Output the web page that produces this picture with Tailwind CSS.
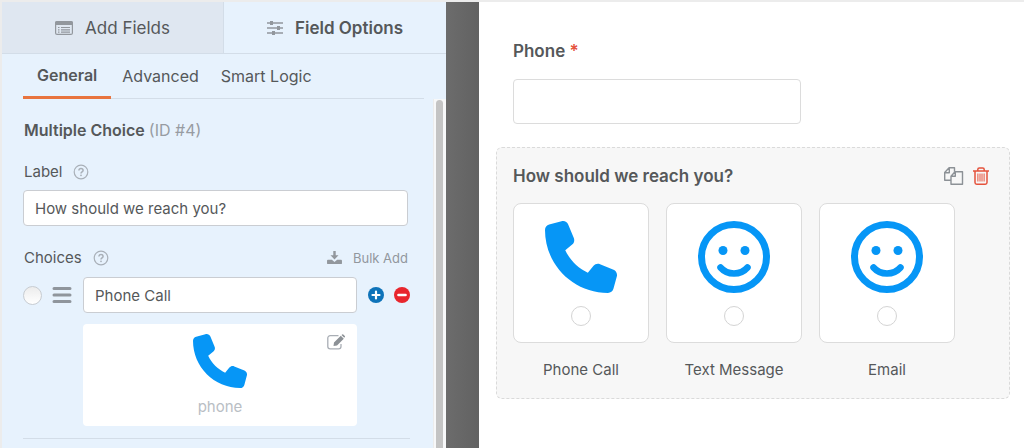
<!DOCTYPE html>
<html lang="en">
<head>
  <meta charset="UTF-8">
  <meta name="viewport" content="width=device-width, initial-scale=1.0">
  <title>Form Builder</title>
  <script src="https://cdn.jsdelivr.net/npm/@tailwindcss/browser@4"></script>
</head>
<body class="min-h-screen flex flex-col border-t-2 border-[#ececec] bg-white font-['Inter',sans-serif] text-[15px] leading-5 text-[#55585a]">
  <!-- Shared icon shapes -->
  <svg class="hidden" aria-hidden="true">
    <symbol id="phone" viewBox="0 0 512 512">
      <path fill="currentColor" d="M164.9 24.6c-7.7-18.6-28-28.5-47.4-23.2l-88 24C12.1 30.2 0 46 0 64C0 311.4 200.6 512 448 512c18 0 33.8-12.1 38.6-29.5l24-88c5.3-19.4-4.6-39.7-23.2-47.4l-96-40c-16.3-6.8-35.2-2.1-46.3 11.6L304.7 368C234.3 334.7 177.3 277.7 144 207.3L193.3 167c13.7-11.2 18.4-30 11.6-46.3l-40-96z"/>
    </symbol>
    <symbol id="smile" viewBox="0 0 72 72">
      <circle cx="36" cy="36" r="32.5" fill="none" stroke="currentColor" stroke-width="7"/>
      <circle cx="25" cy="29.5" r="4.5" fill="currentColor"/>
      <circle cx="47" cy="29.5" r="4.5" fill="currentColor"/>
      <path fill="none" stroke="currentColor" stroke-width="6.5" stroke-linecap="round" d="M22.5 46.5C29.5 54.5 42.5 54.5 49.5 46.5"/>
    </symbol>
    <symbol id="help" viewBox="0 0 16 16">
      <circle cx="8" cy="8" r="6.8" fill="none" stroke="currentColor" stroke-width="1.2"/>
      <path fill="none" stroke="currentColor" stroke-width="1.5" d="M5.9 6.5C6 5.2 6.9 4.6 8 4.6s2.1.7 2.1 1.8C10.1 7.8 8 7.9 8 9.4"/>
      <circle cx="8" cy="11.3" r=".9" fill="currentColor"/>
    </symbol>
  </svg>

  <div class="flex grow">
    <!-- Sidebar -->
    <aside class="w-[446px] shrink-0 flex flex-col border-l-2 border-[#ececec] bg-[#e7f2fd]">
      <div class="grid grid-cols-2 h-[52px] text-[17px]">
        <button class="flex items-center justify-center gap-3 border-r border-b border-[#d3dde8] bg-[#dfe7f1]">
          <svg class="w-[18px] h-4 text-[#92979d]" viewBox="0 0 18 16" fill="none" stroke="currentColor">
            <rect x=".6" y="1.6" width="16.8" height="12.8" rx="1.5" stroke-width="1.2"/>
            <path fill="currentColor" stroke="none" d="M0 3a2 2 0 0 1 2-2h14a2 2 0 0 1 2 2v2H0z"/>
            <path stroke-width="1.2" d="M3 7.5h1.5M6 7.5h9M3 9.8h1.5M6 9.8h9M3 12.1h1.5M6 12.1h9"/>
          </svg>
          Add Fields
        </button>
        <button class="flex items-center justify-center gap-3 border-b border-[#d3dde8] font-semibold">
          <svg class="w-4 h-4 text-[#92979d]" viewBox="0 0 16 16">
            <path fill="none" stroke="currentColor" stroke-width="1.3" d="M0 3h16M0 8h16M0 13h16"/>
            <path fill="currentColor" d="M3 1h3v4H3zM10 6h3v4h-3zM5 11h3v4H5z"/>
          </svg>
          Field Options
        </button>
      </div>

      <nav class="ml-[21px] mr-[22px] flex h-[45px] border-b border-[#d3dde8] text-[16px]">
        <a href="#general" class="-mb-px flex items-center px-[14px] border-b-3 border-[#e8743f] font-semibold">General</a>
        <a href="#advanced" class="flex items-center pl-[11px] pr-[22px]">Advanced</a>
        <a href="#logic" class="flex items-center">Smart Logic</a>
      </nav>

      <div class="flex grow">
        <div class="grow pl-[21px] pr-[22px]">
          <h2 class="mt-[21px] pl-px text-[16px] font-semibold">Multiple Choice <span class="font-normal text-[#979ca2]">(ID #4)</span></h2>

          <div class="mt-[22px] flex items-center gap-[11px] pl-px">
            <label for="fieldLabel">Label</label>
            <svg class="size-4 text-[#a9b0b8]"><use href="#help"/></svg>
          </div>
          <input id="fieldLabel" type="text" value="How should we reach you?" class="mt-2 block h-9 w-[385px] rounded border border-[#cacdd2] bg-white px-[11px]">

          <div class="mt-[22px] flex w-[385px] items-center gap-[11px] pl-px">
            <span>Choices</span>
            <svg class="size-4 text-[#a9b0b8]"><use href="#help"/></svg>
            <button class="ml-auto flex items-center gap-[11px] text-[13px] text-[#92979d]">
              <svg class="w-[15px] h-[14px]" viewBox="0 0 16 15" fill="currentColor">
                <path d="M6.7 0h2.6v4.5h3L8 9 3.7 4.5h3z"/>
                <path d="M1 9.5h4.2L8 11.8l2.8-2.3H15a1 1 0 0 1 1 1V13a1 1 0 0 1-1 1H1a1 1 0 0 1-1-1v-2.5a1 1 0 0 1 1-1z"/>
              </svg>
              Bulk Add
            </button>
          </div>

          <div class="mt-[9px] flex items-center">
            <input type="radio" name="default" aria-label="Default choice" class="size-[19px] appearance-none rounded-full border border-[#c8ccd1] bg-linear-to-b from-[#ececec] to-white">
            <button aria-label="Reorder" class="ml-[10px] text-[#8f959c]">
              <svg class="w-5 h-[18px]" viewBox="0 0 20 18"><path stroke="currentColor" stroke-width="3" stroke-linecap="round" d="M2 2.5h16M2 9h16M2 15.5h16"/></svg>
            </button>
            <input type="text" value="Phone Call" aria-label="Choice label" class="ml-[11px] h-9 w-[274px] rounded border border-[#cacdd2] bg-white px-[11px]">
            <button aria-label="Add choice" class="ml-[11px]">
              <svg class="size-4" viewBox="0 0 16 16"><circle cx="8" cy="8" r="8" fill="#0e73b9"/><path stroke="#fff" stroke-width="2.2" stroke-linecap="round" d="M8 4.5v7M4.5 8h7"/></svg>
            </button>
            <button aria-label="Remove choice" class="ml-[10px]">
              <svg class="size-4" viewBox="0 0 16 16"><circle cx="8" cy="8" r="8" fill="#e8262d"/><path stroke="#fff" stroke-width="2.6" stroke-linecap="round" d="M4.5 8h7"/></svg>
            </button>
          </div>

          <div class="relative ml-[60px] mt-[11px] flex h-[102px] w-[274px] flex-col items-center rounded bg-white pt-[10px]">
            <svg class="size-[54px] text-[#0696f6]"><use href="#phone"/></svg>
            <span class="mt-[9px] text-[#b9bec4]">phone</span>
            <button aria-label="Edit icon" class="absolute right-3 top-[10px] text-[#8c9196]">
              <svg class="w-[18px] h-4" viewBox="0 0 18 16">
                <path fill="none" stroke="#a9aeb5" stroke-width="1.3" d="M11.5 1.7H3.2A2.4 2.4 0 0 0 .8 4.1v8.4a2.4 2.4 0 0 0 2.4 2.4h8.4a2.4 2.4 0 0 0 2.4-2.4V10"/>
                <path fill="currentColor" d="M6.5 12l.5-3.5L13.8 1.7l3 3L10 11.5zM14.5 1l.7-.6q.5-.5 1.1 0l1.5 1.5q.5.6 0 1.1l-.6.8z"/>
              </svg>
            </button>
          </div>

          <hr class="mt-3 w-[387px] border-[#d3dde8]">
        </div>
        <!-- Scrollbar -->
        <div class="w-[13px] shrink-0 border-l border-[#ececec] bg-[#f7f8f9] px-[2px] pt-[1px]">
          <div class="h-full w-[7px] rounded-t-full bg-[#c4c4c4]"></div>
        </div>
      </div>
    </aside>

    <div class="w-[33px] shrink-0 bg-linear-to-r from-[#6c6c6c] to-[#626262]"></div>

    <!-- Form preview -->
    <main class="grow pl-[17px] pr-[14px] pt-[39px]">
      <div class="px-[17px]">
        <label for="phoneField" class="block text-[17px] font-semibold">Phone <span class="text-[#e5533d]">*</span></label>
        <input id="phoneField" type="text" class="mt-[18px] block h-[45px] w-72 rounded border border-[#dcdcdc] bg-white px-3">
      </div>

      <fieldset class="mt-[23px] rounded-md border border-dashed border-[#dadada] bg-[#f7f7f7] px-4 pb-[18px] pt-[17px]">
        <div class="flex items-center">
          <h3 class="text-[17px] leading-[22px] font-semibold">How should we reach you?</h3>
          <button aria-label="Duplicate" class="ml-auto text-[#8c9196]">
            <svg class="w-5 h-[18px]" viewBox="0 0 20 18" fill="none" stroke="currentColor" stroke-width="1.4" stroke-linejoin="round">
              <path d="M7 13.3H.7V5.5L5.100.8h5.400v3.900M5.300.8v4.900H.7"/>
              <path d="M7 9.2l4-4.5h7.500v12.500H7zM11.300 4.700v4.500H7"/>
            </svg>
          </button>
          <button aria-label="Delete" class="ml-[9px] mr-1 text-[#e5533d]">
            <svg class="w-4 h-[18px]" viewBox="0 0 16 18" fill="none" stroke="currentColor" stroke-width="1.5">
              <path d="M0 4h16M4.8 4V2.5Q4.8 1 6.3 1h3.4q1.5 0 1.5 1.5V4"/>
              <path d="M2 4v11.5Q2 17.2 3.7 17.2h8.6q1.7 0 1.7-1.7V4"/>
              <path stroke-width="1" d="M4.9 6.5v8M7 6.5v8M9 6.5v8M11.1 6.5v8"/>
            </svg>
          </button>
        </div>

        <div class="mt-4 flex gap-[17px]">
          <label class="flex w-[136px] flex-col items-center">
            <span class="flex h-[140px] w-full flex-col items-center rounded-lg border border-[#dcdcdc] bg-white pt-[17px]">
              <svg class="size-[72px] text-[#0696f6]"><use href="#phone"/></svg>
              <input type="radio" name="reach" class="mt-[13px] size-5 appearance-none rounded-full border border-[#d4d4d4] bg-white">
            </span>
            <span class="mt-[17px]">Phone Call</span>
          </label>
          <label class="flex w-[136px] flex-col items-center">
            <span class="flex h-[140px] w-full flex-col items-center rounded-lg border border-[#dcdcdc] bg-white pt-[17px]">
              <svg class="size-[72px] text-[#0696f6]"><use href="#smile"/></svg>
              <input type="radio" name="reach" class="mt-[13px] size-5 appearance-none rounded-full border border-[#d4d4d4] bg-white">
            </span>
            <span class="mt-[17px]">Text Message</span>
          </label>
          <label class="flex w-[136px] flex-col items-center">
            <span class="flex h-[140px] w-full flex-col items-center rounded-lg border border-[#dcdcdc] bg-white pt-[17px]">
              <svg class="size-[72px] text-[#0696f6]"><use href="#smile"/></svg>
              <input type="radio" name="reach" class="mt-[13px] size-5 appearance-none rounded-full border border-[#d4d4d4] bg-white">
            </span>
            <span class="mt-[17px]">Email</span>
          </label>
        </div>
      </fieldset>
    </main>
  </div>
</body>
</html>
